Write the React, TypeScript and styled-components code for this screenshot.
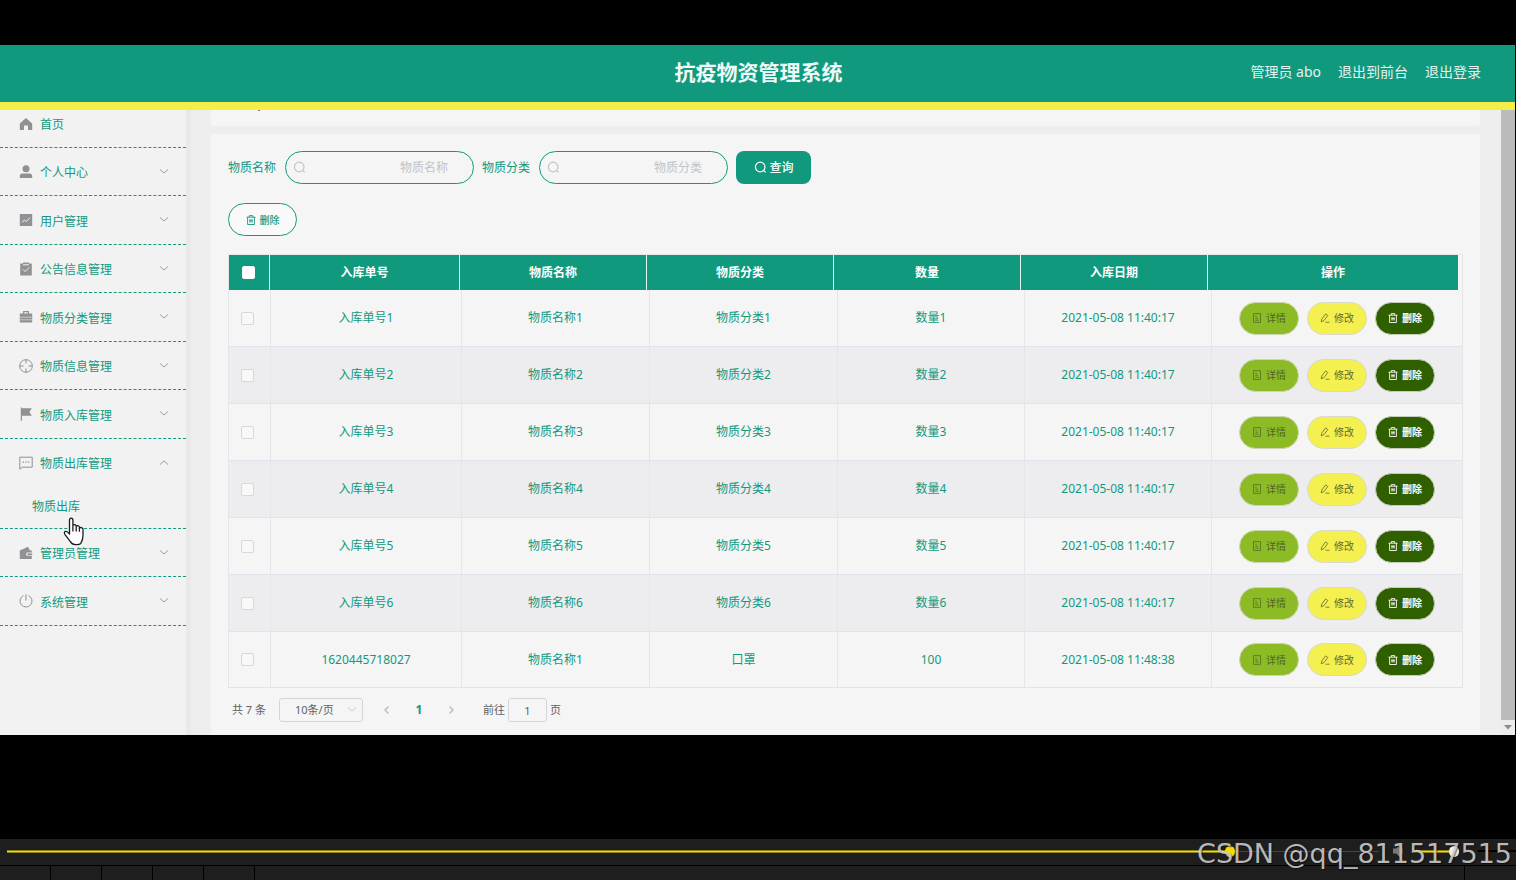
import React, { useState } from "react";
import styled, { createGlobalStyle, css } from "styled-components";

const teal = "#11997e";
const yellow = "#f5ee4a";

const GlobalStyle = createGlobalStyle`
  * { box-sizing: border-box; }
  body {
    margin: 0;
    background: #000;
    font-family: "Noto Sans", "Noto Sans CJK SC", sans-serif;
    font-size: 12px;
    line-height: 18px;
    color: ${teal};
  }
  button, input, select { font: inherit; color: inherit; margin: 0; }
  ul { list-style: none; margin: 0; padding: 0; }
  a { color: inherit; text-decoration: none; }
`;

const Player = styled.div`
  display: flex;
  flex-direction: column;
  min-height: 100vh;
  padding-top: 45px;
  position: relative;
`;

const Screen = styled.div`
  margin-right: 1px;
  background: #eee;
`;

const Header = styled.header`
  display: grid;
  grid-template-columns: 1fr auto 1fr;
  align-items: center;
  height: 65px;
  padding: 0 34px 3px 36px;
  background: ${teal};
  border-bottom: 8px solid ${yellow};
  color: #e3f3ef;
`;

const Title = styled.h1`
  grid-column: 2;
  margin: 0;
  font-size: 21px;
  line-height: 30px;
  font-weight: 700;
  color: #eefaf7;
`;

const HeaderNav = styled.nav`
  display: flex;
  justify-content: flex-end;
  gap: 17px;
  font-size: 14px;
  line-height: 20px;
`;

const Body = styled.div`
  display: flex;
`;

const Sidebar = styled.aside`
  flex: none;
  width: 191px;
  overflow: hidden;
  background: #f2f2f2;
  border-right: 5px solid #e9e9e9;
`;

const Menu = styled.ul`
  margin-top: -10px;
`;

const MenuItem = styled.li`
  border-bottom: 1px dashed ${teal};
`;

const MenuLink = styled.a<{ $tall?: boolean }>`
  display: flex;
  align-items: center;
  height: ${(p) => (p.$tall ? 48 : 47)}px;
  padding: 0 17px 0 19px;
  gap: 7px;
  svg { flex: none; color: #8f9194; }
  span { flex: 1; padding-top: 3px; }
`;

const SubLink = styled.a`
  display: block;
  height: 42px;
  padding: 12px 0 0 32px;
`;

const Main = styled.main`
  flex: 1;
  min-width: 0;
  padding: 0 21px 0 20px;
`;

const Crumbs = styled.div`
  height: 16px;
  margin-bottom: 8px;
  padding-left: 47px;
  background: #f5f5f5;
  border-radius: 0 0 3px 3px;
`;

const CrumbMark = styled.i`
  display: block;
  width: 2px;
  height: 1px;
  background: #a06a50;
`;

const Panel = styled.section`
  padding: 17px 17px 13px;
  background: #f5f5f5;
`;

const SearchForm = styled.form`
  display: flex;
  align-items: center;
  gap: 8px;
  margin-bottom: 19px;
`;

const Field = styled.label`
  display: flex;
  align-items: center;
  gap: 9px;
`;

const Pill = styled.span`
  display: flex;
  align-items: center;
  width: 189px;
  height: 33px;
  padding: 0 25px 0 7px;
  border: 1px solid ${teal};
  border-radius: 17px;
  color: #c0c4cc;
  svg { flex: none; }
  input {
    flex: 1;
    min-width: 0;
    padding: 0;
    border: 0;
    outline: 0;
    background: none;
    text-align: right;
    color: ${teal};
  }
  input::placeholder { color: #c0c4cc; }
`;

const buttonBase = css`
  display: inline-flex;
  align-items: center;
  justify-content: center;
  height: 33px;
  padding: 0;
  cursor: pointer;
`;

const QueryButton = styled.button`
  ${buttonBase}
  gap: 3px;
  width: 75px;
  border: 0;
  border-radius: 8px;
  background: ${teal};
  color: #fff;
  font-weight: 500;
`;

const BatchDelete = styled.button`
  ${buttonBase}
  gap: 4px;
  width: 69px;
  border: 1px solid ${teal};
  border-radius: 17px;
  background: #f9f9f9;
  font-size: 10px;
  font-weight: 500;
`;

const tones = {
  detail: css`background: #8dbb25; border-color: #cdd6b4; color: #4d6426;`,
  edit: css`background: #f3f050; border-color: #d9d9d0; color: #67672f;`,
  remove: css`background: #305f00; border-color: #c5cdba; color: #fff; font-weight: 700;`,
};

const RowButton = styled.button<{ $tone: keyof typeof tones }>`
  ${buttonBase}
  gap: 4px;
  width: 60px;
  border: 1px solid;
  border-radius: 17px;
  font-size: 10px;
  ${(p) => tones[p.$tone]}
`;

const Table = styled.table`
  display: block;
  margin-top: 18px;
  border: 1px solid #e4e6ec;
  border-bottom: 0;
  text-align: center;
  thead, tbody { display: block; }
  tr { display: grid; }
  th, td {
    display: flex;
    align-items: center;
    justify-content: center;
    padding: 0;
  }
  th:first-child, td:first-child { justify-content: flex-start; padding-left: 12px; }
`;

const HeadRow = styled.tr`
  grid-template-columns: 41px 190fr 187fr 187fr 187fr 187fr 250fr;
  height: 35px;
  margin-right: 4px;
  background: ${teal};
  color: #fff;
  th { font-weight: 700; border-right: 1px solid #e4f3f0; }
  th:first-child { padding-left: 13px; }
  th:last-child { border-right: 0; }
`;

const BodyRow = styled.tr`
  grid-template-columns: 42px 191fr 188fr 188fr 187fr 187fr 250fr;
  height: 57px;
  border-bottom: 1px solid #e1e3ea;
  &:nth-child(even) { background: #ededf0; }
  &:last-child { height: 56px; }
  td { border-right: 1px solid #e4e6ec; }
  td:last-child { border-right: 0; gap: 8px; }
`;

const Check = styled.input<{ $head?: boolean }>`
  appearance: none;
  width: 13px;
  height: 13px;
  border: 1px solid ${(p) => (p.$head ? "#fff" : "#d6d8de")};
  border-radius: 2px;
  background: ${(p) => (p.$head ? "#fff" : "#f8f8f8")};
  &:checked { background: ${teal}; }
`;

const Pagination = styled.div`
  display: flex;
  align-items: center;
  margin-top: 10px;
  padding-left: 4px;
  font-size: 11px;
  line-height: 16px;
  color: #606266;
`;

const SizeBox = styled.span`
  display: flex;
  position: relative;
  margin: 0 16px 0 13px;
  svg { position: absolute; right: 6px; top: 7px; color: #c0c4cc; pointer-events: none; }
`;

const SizeSelect = styled.select`
  appearance: none;
  width: 84px;
  height: 24px;
  padding: 0 0 0 15px;
  border: 1px solid #d3d5db;
  border-radius: 3px;
  background: #f5f5f5;
`;

const PageButton = styled.button<{ $active?: boolean }>`
  display: flex;
  align-items: center;
  justify-content: center;
  width: ${(p) => (p.$active ? 48 : 16)}px;
  height: 24px;
  padding: 0;
  border: 0;
  background: none;
  color: ${(p) => (p.$active ? teal : "#b3b6bd")};
  font-size: 12px;
  font-weight: 700;
`;

const Jump = styled.label`
  display: flex;
  align-items: center;
  gap: 3px;
  margin-left: 24px;
  input {
    width: 39px;
    height: 24px;
    padding: 0;
    border: 1px solid #d3d5db;
    border-radius: 3px;
    background: #f5f5f5;
    text-align: center;
  }
`;

const Scrollbar = styled.div`
  display: flex;
  flex-direction: column;
  flex: none;
  width: 14px;
  background: #ececec;
`;

const ScrollThumb = styled.div`
  flex: 1;
  background: #bbb;
`;

const ScrollArrow = styled.span`
  display: flex;
  align-items: center;
  justify-content: center;
  height: 15px;
`;

const Cursor = styled.svg`
  position: absolute;
  left: 63px;
  top: 517px;
`;

const Controls = styled.footer`
  margin-top: auto;
  background: #1e1e1e;
`;

const SeekRow = styled.div`
  display: flex;
  align-items: center;
  height: 27px;
  padding: 0 0 2px 7px;
  border-bottom: 1px solid #000;
`;

const Range = styled.input<{ $filled: number; $thumb: string }>`
  appearance: none;
  display: block;
  height: 11px;
  background: none;
  &::-webkit-slider-runnable-track {
    height: 3px;
    background:
      linear-gradient(transparent 1px, #f5dc00 1px, #f5dc00 2px, transparent 2px) 0 0 / ${(p) => p.$filled}% 100% no-repeat,
      linear-gradient(#8f8210, #8f8210) 0 0 / ${(p) => p.$filled}% 100% no-repeat,
      linear-gradient(transparent 1px, #444 1px, #444 2px, transparent 2px);
  }
  &::-webkit-slider-thumb {
    appearance: none;
    width: 10px;
    height: 11px;
    margin-top: -4px;
    border-radius: 50%;
    background: ${(p) => p.$thumb};
  }
`;

const Seek = styled(Range)`
  flex: 1;
  min-width: 0;
`;

const Volume = styled(Range)`
  width: 45px;
  margin-left: 9px;
`;

const Groove = styled.span`
  width: 38px;
  height: 2px;
  margin-left: 19px;
  background: #000;
`;

const ToolRow = styled.div`
  display: flex;
  height: 14px;
`;

const ToolCell = styled.span`
  width: 51px;
  border-right: 1px solid #000;
`;

const ToolEnd = styled.span`
  width: 52px;
  margin-left: auto;
  border-left: 1px solid #000;
`;

const Watermark = styled.div`
  position: absolute;
  right: 4px;
  bottom: 7px;
  font-family: "DejaVu Sans", sans-serif;
  font-weight: 400;
  font-size: 27px;
  line-height: 38px;
  color: rgba(215, 215, 215, 0.85);
  text-shadow: 1px 1px 1px rgba(0, 0, 0, 0.5);
  pointer-events: none;
`;

const Line = ({ d, size = 10, box = 10, width = 1 }: { d: string; size?: number; box?: number; width?: number }) => (
  <svg width={size} height={size} viewBox={`0 0 ${box} ${box}`} fill="none" stroke="currentColor" strokeWidth={width} aria-hidden>
    <path d={d} />
  </svg>
);

const SearchIcon = () => <Line size={13} box={13} d="M6.2 1.2a4.8 4.8 0 1 0 0 9.6a4.8 4.8 0 1 0 0 -9.6M9.8 9.6L11.6 11.4" width={1.2} />;
const TrashIcon = () => <Line d="M0.5 2.2H9.5M3.3 2V0.6H6.7V2M1.6 2.2V9.5H8.4V2.2M4 4V7.6M6 4V7.6M3.4 5.8H6.6" width={0.9} />;
const DetailIcon = () => <Line d="M1.5 0.6H8.5V9.4H1.5ZM3.2 3.2H4.8M3.2 5.2H6M3.2 7.2H6.8" width={0.7} />;
const EditIcon = () => <Line d="M1.2 8.8L1.8 6L5.6 0.9L7.8 2.5L4 7.6L1.2 8.8M5.5 9.2H9.5" width={0.8} />;
const Chevron = ({ up }: { up?: boolean }) => <Line d={up ? "M1 6.5L5 3L9 6.5" : "M1 2.5L5 6L9 2.5"} width={0.9} />;

const menuIcons: Record<string, React.ReactNode> = {
  home: <path fill="currentColor" d="M7 1L0.8 6.4V13H5V8.6H9V13H13.2V6.4Z" />,
  user: <path fill="currentColor" d="M7 0.2a3.5 3.5 0 1 1 0 7a3.5 3.5 0 1 1 0 -7M0.8 13V11Q0.8 8.4 3.6 8.4H10.4Q13.2 8.4 13.2 11V13Z" />,
  chart: (
    <>
      <rect x="0.8" y="1" width="12.4" height="12" fill="currentColor" />
      <path d="M3 9.4L5.4 7L7.2 8.4L11 4.8" stroke="#f2f2f2" fill="none" />
    </>
  ),
  clip: (
    <>
      <path fill="currentColor" d="M1.2 1.6H4V0.6H10V1.6H12.8V13.4H1.2Z" />
      <path d="M4 7.4L6.2 9.6L10.2 5.4M4 2.8H10" stroke="#f2f2f2" fill="none" />
    </>
  ),
  bag: (
    <>
      <path fill="currentColor" d="M4 3.4V1H10V3.4H13.2V12.6H0.8V3.4ZM5.2 3.4H8.8V2.2H5.2Z" fillRule="evenodd" />
      <path d="M0.8 7.2H13.2M0.8 9.8H13.2" stroke="#e0e0e0" strokeWidth="0.7" />
    </>
  ),
  aim: (
    <g stroke="currentColor" fill="none">
      <circle cx="7" cy="7" r="6.3" />
      <path d="M7 0.7V4.6M7 9.4V13.3M0.7 7H4.6M9.4 7H13.3" />
    </g>
  ),
  flag: <path fill="currentColor" d="M1.8 0.4H3V1.2H12.8L10.4 5L12.8 8.8H3V13.8H1.8Z" />,
  chat: (
    <g stroke="currentColor" fill="none">
      <path d="M0.8 1.2H13.2V11.2H3.4L0.8 13.2Z" strokeLinejoin="round" />
      <path d="M3.6 6.2H5M6.3 6.2H7.7M9 6.2H10.4" strokeWidth="1.3" />
    </g>
  ),
  wallet: (
    <>
      <path fill="currentColor" d="M0.8 4.4L9 0.8L11 4.4H12.8V6.6H8.4Q7 6.6 7 8.2T8.4 9.8H12.8V13H0.8Z" />
      <rect x="8.4" y="7.4" width="4.8" height="1.7" fill="currentColor" />
    </>
  ),
  power: <path d="M7 0.4V6.6M4.4 1.6a6 6 0 1 0 5.2 0" stroke="currentColor" fill="none" />,
};

const menu = [
  { icon: "home", text: "首页" },
  { icon: "user", text: "个人中心" },
  { icon: "chart", text: "用户管理", tall: true },
  { icon: "clip", text: "公告信息管理" },
  { icon: "bag", text: "物质分类管理", tall: true },
  { icon: "aim", text: "物质信息管理" },
  { icon: "flag", text: "物质入库管理", tall: true },
  { icon: "chat", text: "物质出库管理", child: "物质出库" },
  { icon: "wallet", text: "管理员管理" },
  { icon: "power", text: "系统管理", tall: true },
];

const columns = ["入库单号", "物质名称", "物质分类", "数量", "入库日期", "操作"];

const rows = [
  ...[1, 2, 3, 4, 5, 6].map((n) => [`入库单号${n}`, `物质名称${n}`, `物质分类${n}`, `数量${n}`, "2021-05-08 11:40:17"]),
  ["1620445718027", "物质名称1", "口罩", "100", "2021-05-08 11:48:38"],
];

export default function App() {
  const [seek, setSeek] = useState(894);
  const [volume, setVolume] = useState(100);

  return (
    <Player>
      <GlobalStyle />
      <Screen>
        <Header>
          <Title>抗疫物资管理系统</Title>
          <HeaderNav>
            <span>管理员 abo</span>
            <a href="#front">退出到前台</a>
            <a href="#logout">退出登录</a>
          </HeaderNav>
        </Header>
        <Body>
          <Sidebar>
            <Menu>
              {menu.map((item, i) => (
                <MenuItem key={item.text}>
                  <MenuLink href="#menu" $tall={item.tall}>
                    <svg width="14" height="14" viewBox="0 0 14 14" aria-hidden>{menuIcons[item.icon]}</svg>
                    <span>{item.text}</span>
                    {i > 0 && <Chevron up={!!item.child} />}
                  </MenuLink>
                  {item.child && <SubLink href="#out">{item.child}</SubLink>}
                </MenuItem>
              ))}
            </Menu>
          </Sidebar>
          <Main>
            <Crumbs><CrumbMark /></Crumbs>
            <Panel>
              <SearchForm onSubmit={(e) => e.preventDefault()}>
                {["物质名称", "物质分类"].map((name) => (
                  <Field key={name}>
                    {name}
                    <Pill>
                      <SearchIcon />
                      <input type="text" placeholder={name} />
                    </Pill>
                  </Field>
                ))}
                <QueryButton type="submit"><SearchIcon />查询</QueryButton>
              </SearchForm>
              <BatchDelete type="button"><TrashIcon />删除</BatchDelete>
              <Table>
                <thead>
                  <HeadRow>
                    <th><Check type="checkbox" $head aria-label="全选" /></th>
                    {columns.map((c) => <th key={c}>{c}</th>)}
                  </HeadRow>
                </thead>
                <tbody>
                  {rows.map((row) => (
                    <BodyRow key={row[0]}>
                      <td><Check type="checkbox" aria-label={row[0]} /></td>
                      {row.map((cell) => <td key={cell}>{cell}</td>)}
                      <td>
                        <RowButton type="button" $tone="detail"><DetailIcon />详情</RowButton>
                        <RowButton type="button" $tone="edit"><EditIcon />修改</RowButton>
                        <RowButton type="button" $tone="remove"><TrashIcon />删除</RowButton>
                      </td>
                    </BodyRow>
                  ))}
                </tbody>
              </Table>
              <Pagination>
                <span>共 7 条</span>
                <SizeBox>
                  <SizeSelect aria-label="每页条数"><option>10条/页</option></SizeSelect>
                  <Chevron />
                </SizeBox>
                <PageButton type="button" aria-label="上一页"><Line d="M6.5 1.5L3 5L6.5 8.5" width={1.2} /></PageButton>
                <PageButton type="button" $active>1</PageButton>
                <PageButton type="button" aria-label="下一页"><Line d="M3.5 1.5L7 5L3.5 8.5" width={1.2} /></PageButton>
                <Jump>
                  前往<input type="text" defaultValue="1" />页
                </Jump>
              </Pagination>
            </Panel>
          </Main>
          <Scrollbar>
            <ScrollThumb />
            <ScrollArrow>
              <svg width="8" height="5" viewBox="0 0 8 5" aria-hidden><path d="M0 0H8L4 4.5Z" fill="#8c8c8c" /></svg>
            </ScrollArrow>
          </Scrollbar>
        </Body>
      </Screen>
      <Controls>
        <SeekRow>
          <Seek type="range" min={0} max={1000} value={seek} $filled={seek / 10} $thumb="#f5dc00" aria-label="进度" onChange={(e) => setSeek(Number(e.target.value))} />
          <svg width="26" height="14" viewBox="0 0 26 14" aria-hidden>
            <path d="M14 4.5H17L21 1V13L17 9.5H14Z" fill="#777" />
            <path d="M23.5 4V10" stroke="#555" />
          </svg>
          <Volume type="range" min={0} max={100} value={volume} $filled={volume} $thumb="#eee" aria-label="音量" onChange={(e) => setVolume(Number(e.target.value))} />
          <Groove />
        </SeekRow>
        <ToolRow>
          <ToolCell /><ToolCell /><ToolCell /><ToolCell /><ToolCell />
          <ToolEnd />
        </ToolRow>
      </Controls>
      <Cursor width="22" height="29" viewBox="0 0 22 29" aria-hidden>
        <path
          d="M6.5 17V3.4Q6.5 1.2 8.2 1.2T9.9 3.4V10V8.4Q11.4 6.6 13.2 8.6V11V9.4Q14.8 7.8 16.4 9.8V12V11Q18.6 9.6 20 12V18Q20 23 17.8 26.4Q16 28 12.4 27.6Q9 27.6 7.2 24.4L2 17.6Q0.6 15.4 2.4 14.4Q4.2 14 6.5 17ZM9.9 10V14.4M13.2 11V14.4M16.4 12V14.8"
          fill="#fff"
          stroke="#1c1c24"
          strokeWidth="1.3"
          strokeLinejoin="round"
        />
      </Cursor>
      <Watermark>CSDN @qq_811517515</Watermark>
    </Player>
  );
}
